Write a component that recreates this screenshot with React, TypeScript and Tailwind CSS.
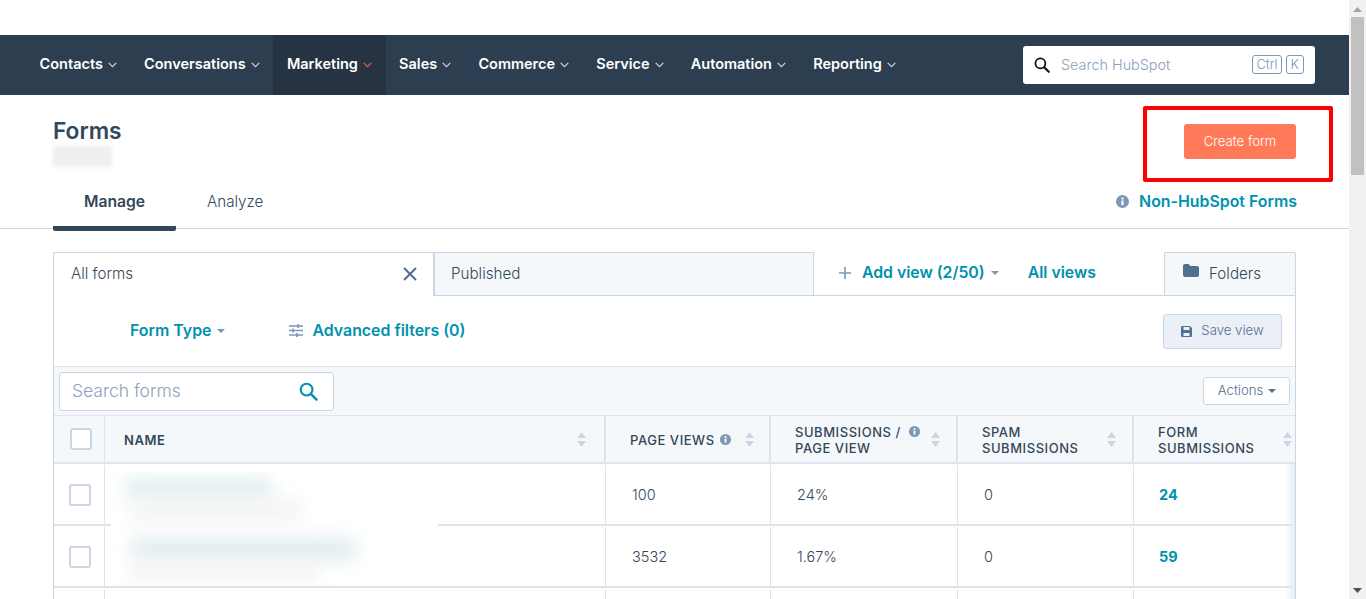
import React from 'react';

const Chevron = ({ color = '#cbd6e2' }: { color?: string }) => (
  <svg width="9" height="6" viewBox="0 0 9 6" fill="none" className="ml-[5px] mt-[2px]">
    <path d="M0.7 0.9 L4.5 4.7 L8.3 0.9" stroke={color} strokeWidth="1.2" />
  </svg>
);

const Caret = ({ color = '#7c98b6' }: { color?: string }) => (
  <svg width="8" height="4" viewBox="0 0 8 4" className="ml-[6px]">
    <path d="M0 0 H8 L4 4 Z" fill={color} />
  </svg>
);

const Info = ({ size = 12 }: { size?: number }) => (
  <svg width={size} height={size} viewBox="0 0 12 12" className="shrink-0">
    <circle cx="6" cy="6" r="6" fill="#7c98b6" />
    <rect x="5" y="5" width="2" height="4.4" fill="#fff" />
    <rect x="5" y="2.4" width="2" height="1.7" fill="#fff" />
  </svg>
);

const Sort = () => (
  <svg width="9" height="15" viewBox="0 0 9 15" className="shrink-0">
    <path d="M4.5 0 L9 6 H0 Z" fill="#cbd6e2" />
    <path d="M0 9 H9 L4.5 15 Z" fill="#cbd6e2" />
  </svg>
);

const Search = ({ color, size }: { color: string; size: number }) => (
  <svg width={size} height={size} viewBox="0 0 18 18" fill="none" className="shrink-0">
    <circle cx="7.2" cy="7.2" r="5.6" stroke={color} strokeWidth="2" />
    <path d="M11.4 11.4 L16.6 16.6" stroke={color} strokeWidth="2.4" strokeLinecap="round" />
  </svg>
);

const navItems = ['Contacts', 'Conversations', 'Marketing', 'Sales', 'Commerce', 'Service', 'Automation', 'Reporting'];

const Nav = () => (
  <nav className="flex h-[60px] items-center justify-between bg-[#2d3e50] pr-[34px]">
    <div className="flex h-full items-stretch pl-[26px]">
      {navItems.map((item) => (
        <div
          key={item}
          className={`flex items-center px-[13.6px] pb-[2px] text-[14.5px] font-semibold text-white ${item === 'Marketing' ? 'bg-[#253342]' : ''}`}
        >
          {item}
          <Chevron color={item === 'Marketing' ? '#f2603f' : '#cbd6e2'} />
        </div>
      ))}
    </div>
    <div className="flex h-[38px] w-[292px] items-center rounded-[3px] bg-white pb-[1px] pl-[11px] pr-[11px]">
      <Search color="#111" size={16} />
      <span className="ml-[11px] flex-1 text-[14.4px] font-light text-[#8ba2bb]">Search HubSpot</span>
      <span className="rounded-[3px] border border-[#7c98b6] px-[3px] text-[13px] leading-[17px] font-light text-[#7c98b6]">Ctrl</span>
      <span className="ml-[4px] rounded-[3px] border border-[#7c98b6] px-[4px] text-[13px] leading-[17px] font-light text-[#7c98b6]">K</span>
    </div>
  </nav>
);

const PageHeader = () => (
  <header className="relative border-b border-[#cbd6e2]">
    <div className="flex items-start justify-between px-[53px] pt-[25px]">
      <div>
        <h1 className="text-[22.7px] leading-[22px] font-semibold text-[#33475b]">Forms</h1>
        <div className="mt-[4px] h-[21px] w-[59px] bg-[#efefef] blur-[2px]" />
      </div>
      <button className="mt-[4px] h-[35px] w-[112px] rounded-[3px] bg-[#ff7a59] text-[13.2px] font-light text-white">Create form</button>
    </div>
    <div className="mt-[13px] flex items-center justify-between pl-[53px] pr-[52px]">
      <div className="flex text-[15.2px]">
        <div className="-mb-[3px] flex h-[51px] w-[123px] items-start justify-center rounded-b-[2px] border-b-[5px] border-[#33475b] pt-[12px] text-[15.7px] leading-[20px] font-semibold text-[#33475b]">Manage</div>
        <div className="ml-[31px] pt-[12px] leading-[20px] font-light text-[#33475b]">Analyze</div>
      </div>
      <div className="-mt-[4px] flex items-center">
        <Info size={13} />
        <span className="ml-[10px] text-[15.9px] font-semibold text-[#0091ae]">Non-HubSpot Forms</span>
      </div>
    </div>
    {/* red annotation from the screenshot */}
    <div className="absolute left-[1143px] top-[11px] h-[76px] w-[190px] rounded-[2px] border-[4px] border-[#ff0000]" />
  </header>
);

const Tabs = () => (
  <div className="flex h-[44px] text-[15.2px] font-light">
    <div className="flex w-[380px] items-start justify-between rounded-tl-[2px] border-l border-t border-[#cbd6e2] pl-[17px] pr-[15px] pt-[10px] text-[#33475b]">
      All forms
      <svg width="16" height="16" viewBox="0 0 16 16" className="mt-[3px]">
        <path d="M2 2 L14 14 M14 2 L2 14" stroke="#516f90" strokeWidth="2" />
      </svg>
    </div>
    <div className="w-[381px] border border-l-2 border-[#cbd6e2] bg-[#f5f8fa] pl-[16px] pt-[10px] text-[#33475b]">Published</div>
    <div className="flex flex-1 items-start border-b border-[#cbd6e2] pl-[24px] pt-[9px] text-[15.8px] font-semibold text-[#0091ae]">
      <div className="flex items-center">
        <svg width="14" height="14" viewBox="0 0 14 14" className="mr-[10px]">
          <path d="M7 1 V13 M1 7 H13" stroke="#7c98b6" strokeWidth="1.6" />
        </svg>
        Add view (2/50)
        <Caret />
      </div>
      <span className="ml-[29px]">All views</span>
    </div>
    <div className="flex w-[132px] items-start rounded-tr-[2px] border border-[#cbd6e2] bg-[#f5f8fa] pl-[18px] pt-[10px] text-[#33475b]">
      <svg width="16" height="14" viewBox="0 0 16 14" className="mr-[10px] mt-[1px]">
        <path d="M0 2 Q0 0 2 0 H5.5 L7.5 2 H14 Q16 2 16 4 V11 Q16 13 14 13 H2 Q0 13 0 11 Z" fill="#516f90" />
      </svg>
      Folders
    </div>
  </div>
);

const Filters = () => (
  <div className="flex h-[71px] items-center justify-between border-b border-[#dfe3eb] pl-[76px] pr-[13px]">
    <div className="flex items-center text-[15.9px] font-semibold text-[#0091ae]">
      Form Type
      <Caret />
      <svg width="14" height="13" viewBox="0 0 14 13" className="ml-[64px] mr-[9px]">
        <path d="M0 2 H14 M0 6.5 H14 M0 11 H14" stroke="#7c98b6" strokeWidth="1.3" />
        <path d="M9 0 V4 M4 4.5 V8.5 M8 9 V13" stroke="#7c98b6" strokeWidth="1.6" />
      </svg>
      Advanced filters (0)
    </div>
    <button className="flex h-[35px] w-[119px] items-center justify-center rounded-[3px] border border-[#cbd6e2] bg-[#eaf0f6] text-[13.2px] font-light text-[#516f90]">
      <svg width="11" height="11" viewBox="0 0 11 11" className="mr-[9px]">
        <path fillRule="evenodd" d="M0 1 Q0 0 1 0 H9 L11 2 V10 Q11 11 10 11 H1 Q0 11 0 10 Z M2.5 1 V4 H8.5 V1 Z M2.5 7 V10 H8.5 V7 Z" fill="#516f90" />
      </svg>
      Save view
    </button>
  </div>
);

const TableTools = () => (
  <div className="flex h-[49px] items-start justify-between border-b border-[#dfe3eb] bg-[#f5f8fa] pl-[5px] pr-[5px] pt-[5px]">
    <div className="flex h-[39px] w-[275px] items-center justify-between rounded-[3px] border border-[#cbd6e2] bg-white pl-[12px] pr-[15px]">
      <span className="text-[17.5px] font-light text-[#8ba2bb]">Search forms</span>
      <Search color="#0091ae" size={19} />
    </div>
    <button className="mt-[5px] flex h-[28px] w-[87px] items-center justify-center rounded-[3px] border border-[#cbd6e2] bg-white pl-[1px] text-[13.2px] font-light text-[#516f90]">
      Actions
      <svg width="8" height="4" viewBox="0 0 8 4" className="ml-[5px]">
        <path d="M0 0 H8 L4 4 Z" fill="#516f90" />
      </svg>
    </button>
  </div>
);

const cols = 'grid grid-cols-[51px_501px_165px_187px_176px_1fr]';
const headCell = 'flex items-center justify-between border-r-2 border-[#dfe3eb] pt-[1px] text-[13px] leading-[16px] font-medium tracking-[0.55px] text-[#33475b]';

const Checkbox = () => (
  <div className="h-[22px] w-[22px] rounded-[3px] border-2 border-[#cbd6e2] bg-white" />
);

const TableHead = () => (
  <div className={`${cols} h-[48px] border-b-2 border-[#dfe3eb] bg-[#f5f8fa]`}>
    <div className="flex items-center justify-center border-r border-[#dfe3eb] pl-[3px]">
      <Checkbox />
    </div>
    <div className={`${headCell} pl-[19px] pr-[18px]`}>
      <span className="font-semibold">NAME</span>
      <Sort />
    </div>
    <div className={`${headCell} pl-[24px] pr-[15px]`}>
      <span className="flex items-center gap-[5px]">PAGE VIEWS <Info size={11} /></span>
      <Sort />
    </div>
    <div className={`${headCell} pl-[24px] pr-[16px]`}>
      <span>
        <span className="flex items-center gap-[8px]">SUBMISSIONS / <Info size={11} /></span>
        PAGE VIEW
      </span>
      <Sort />
    </div>
    <div className={`${headCell} pl-[24px] pr-[16px]`}>
      <span>SPAM<br />SUBMISSIONS</span>
      <Sort />
    </div>
    <div className="flex items-center justify-between pl-[24px] pr-[3px] pt-[1px] text-[13px] leading-[16px] font-medium tracking-[0.55px] text-[#33475b]">
      <span>FORM<br />SUBMISSIONS</span>
      <Sort />
    </div>
  </div>
);

const rows = [
  { views: '100', rate: '24%', spam: '0', subs: '24' },
  { views: '3532', rate: '1.67%', spam: '0', subs: '59' },
  { views: '', rate: '', spam: '', subs: '' },
];

const TableRow = ({ views, rate, spam, subs }: { views: string; rate: string; spam: string; subs: string }) => (
  <div className={`${cols} h-[62px] border-b-2 border-[#dfe3eb] pt-[1px] text-[14.5px] font-light text-[#33475b]`}>
    <div className="flex items-center justify-center border-r border-[#dfe3eb] pl-[1px]">
      {views && <Checkbox />}
    </div>
    <div className="border-r border-[#dfe3eb]" />
    <div className="flex items-center border-r border-[#dfe3eb] pl-[26px]">{views}</div>
    <div className="flex items-center border-r border-[#dfe3eb] pl-[26px]">{rate}</div>
    <div className="flex items-center border-r border-[#dfe3eb] pl-[26px]">{spam}</div>
    <div className="flex items-center pl-[25px] font-bold text-[#0091ae]">{subs}</div>
  </div>
);

export default function App() {
  return (
    <div className="flex h-[599px] w-[1366px] overflow-hidden bg-white font-['Inter',sans-serif]">
      <div className="relative w-[1349px] shrink-0 pt-[35px]">
        <Nav />
        <PageHeader />
        <section className="mx-[53px] mt-[23px]">
          <Tabs />
          <div className="relative overflow-hidden border-x border-[#cbd6e2]">
            <Filters />
            <TableTools />
            <TableHead />
            {rows.map((r, i) => (
              <TableRow key={i} {...r} />
            ))}
            {/* fade at the right edge of the scrolling table */}
            <div className="absolute bottom-0 right-0 top-[168px] w-[10px] bg-gradient-to-r from-transparent to-[#e5ebf1]" />
            {/* blurred-out form names */}
            <div className="absolute left-[57px] top-[176px] h-[114px] w-[327px] overflow-hidden bg-white">
              <div className="absolute left-[15px] top-[8px] h-[18px] w-[145px] bg-[#dcebee] blur-[9px]" />
              <div className="absolute left-[20px] top-[27px] h-[22px] w-[170px] bg-[#f3f3f3] blur-[9px]" />
              <div className="absolute left-[20px] top-[67px] h-[20px] w-[225px] bg-[#dcebee] blur-[9px]" />
              <div className="absolute left-[20px] top-[88px] h-[20px] w-[190px] bg-[#f3f3f3] blur-[9px]" />
            </div>
          </div>
        </section>
      </div>
      <aside className="flex w-[17px] shrink-0 flex-col items-center justify-between bg-[#f1f1f1] pb-[6px] pt-[7px]">
        <div className="flex flex-col items-center">
          <svg width="9" height="5" viewBox="0 0 9 5">
            <path d="M4.5 0 L9 5 H0 Z" fill="#a3a3a3" />
          </svg>
          <div className="mt-[5px] h-[158px] w-[13px] bg-[#c1c1c1]" />
        </div>
        <svg width="9" height="5" viewBox="0 0 9 5">
          <path d="M0 0 H9 L4.5 5 Z" fill="#505050" />
        </svg>
      </aside>
    </div>
  );
}
